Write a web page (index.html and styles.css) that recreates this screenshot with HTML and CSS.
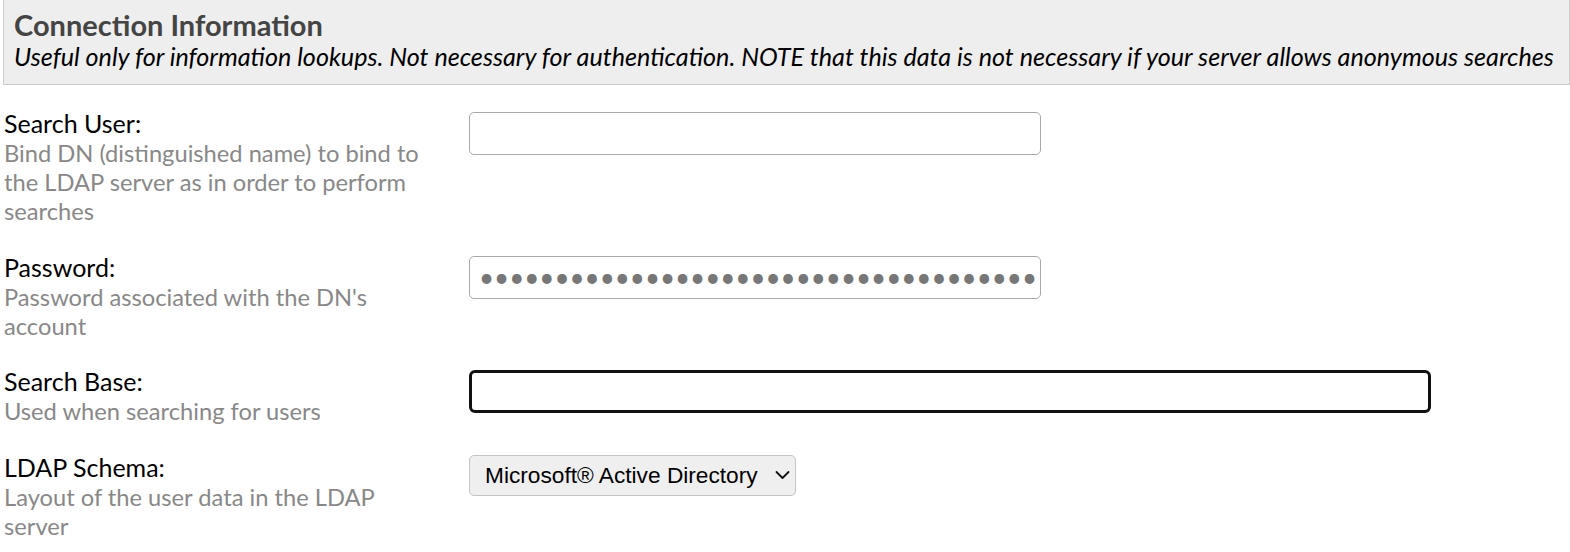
FILE: index.html
```html
<!DOCTYPE html>
<html>
<head>
<meta charset="utf-8">
<link rel="stylesheet" href="styles.css">
</head>
<body>
<div class="section-head">
  <div class="title">Connection Information</div>
  <div class="subtitle">Useful only for information lookups. Not necessary for authentication. NOTE that this data is not necessary if your server allows anonymous searches</div>
</div>
<div class="form">
  <div class="row">
    <div class="label">
      <div class="name">Search User:</div>
      <div class="desc">Bind DN (distinguished name) to bind to the LDAP server as in order to perform searches</div>
    </div>
    <div class="field"><input class="text" type="text" value=""></div>
  </div>
  <div class="row">
    <div class="label">
      <div class="name">Password:</div>
      <div class="desc">Password associated with the DN's account</div>
    </div>
    <div class="field"><input class="text pw" type="password" value="aaaaaaaaaaaaaaaaaaaaaaaaaaaaaaaaaaaaa"></div>
  </div>
  <div class="row">
    <div class="label">
      <div class="name">Search Base:</div>
      <div class="desc">Used when searching for users</div>
    </div>
    <div class="field"><input class="text wide focused" type="text" value=""></div>
  </div>
  <div class="row">
    <div class="label">
      <div class="name">LDAP Schema:</div>
      <div class="desc">Layout of the user data in the LDAP server</div>
    </div>
    <div class="field">
      <div class="select">
        <span class="select-text">Microsoft® Active Directory</span>
        <svg class="chev" width="16" height="10" viewBox="0 0 16 10"><path d="M1.5 2 L7.5 8 L13.5 2" fill="none" stroke="#111" stroke-width="1.8" stroke-linecap="round" stroke-linejoin="round"/></svg>
      </div>
    </div>
  </div>
</div>
</body>
</html>
```
FILE: styles.css
```css
html, body {
  margin: 0;
  padding: 0;
  background: #fff;
}
body {
  font-family: Lato, "Noto Sans", sans-serif;
  color: #000;
}
.section-head {
  margin-left: 3px;
  background: #eeeeee;
  border: 1px solid #cccccc;
  border-top: none;
  padding: 9px 10px 13px 10px;
}
.title {
  font-size: 29px;
  font-weight: bold;
  color: #444;
  line-height: 32px;
}
.subtitle {
  font-size: 25.15px;
  font-style: italic;
  line-height: 30px;
  color: #000;
}
.form {
  padding-left: 4px;
  padding-top: 23px;
}
.row {
  display: grid;
  grid-template-columns: 465px 1fr;
  margin-bottom: 25.5px;
}
.name {
  font-size: 25px;
  line-height: 31px;
  color: #000;
}
.desc {
  font-size: 23.7px;
  line-height: 29px;
  color: #888;
  max-width: 430px;
}
.field {
  padding-top: 4px;
}
.text {
  box-sizing: border-box;
  width: 572px;
  height: 43px;
  border: 1px solid #aaaaaa;
  border-radius: 5px;
  padding: 0 9px;
  font-family: Lato, sans-serif;
  font-size: 25.5px;
  color: #777;
  outline: none;
  margin: 0;
  display: block;
}
.text.pw {
  font-size: 26px;
  padding: 0 3px 0 9px;
}
.text.wide {
  width: 962px;
}
.text.focused {
  border: 3px solid #111;
  border-radius: 6px;
}
.select {
  box-sizing: border-box;
  display: inline-flex;
  align-items: center;
  height: 41px;
  width: 327px;
  margin-top: -1px;
  background: #efefef;
  border: 1px solid #c4c4c4;
  border-radius: 5px;
  padding: 0 4px 0 15px;
  font-family: "Liberation Sans", Arial, sans-serif;
  font-size: 22.7px;
  color: #000;
  justify-content: space-between;
}
.chev {
  display: block;
}
```
